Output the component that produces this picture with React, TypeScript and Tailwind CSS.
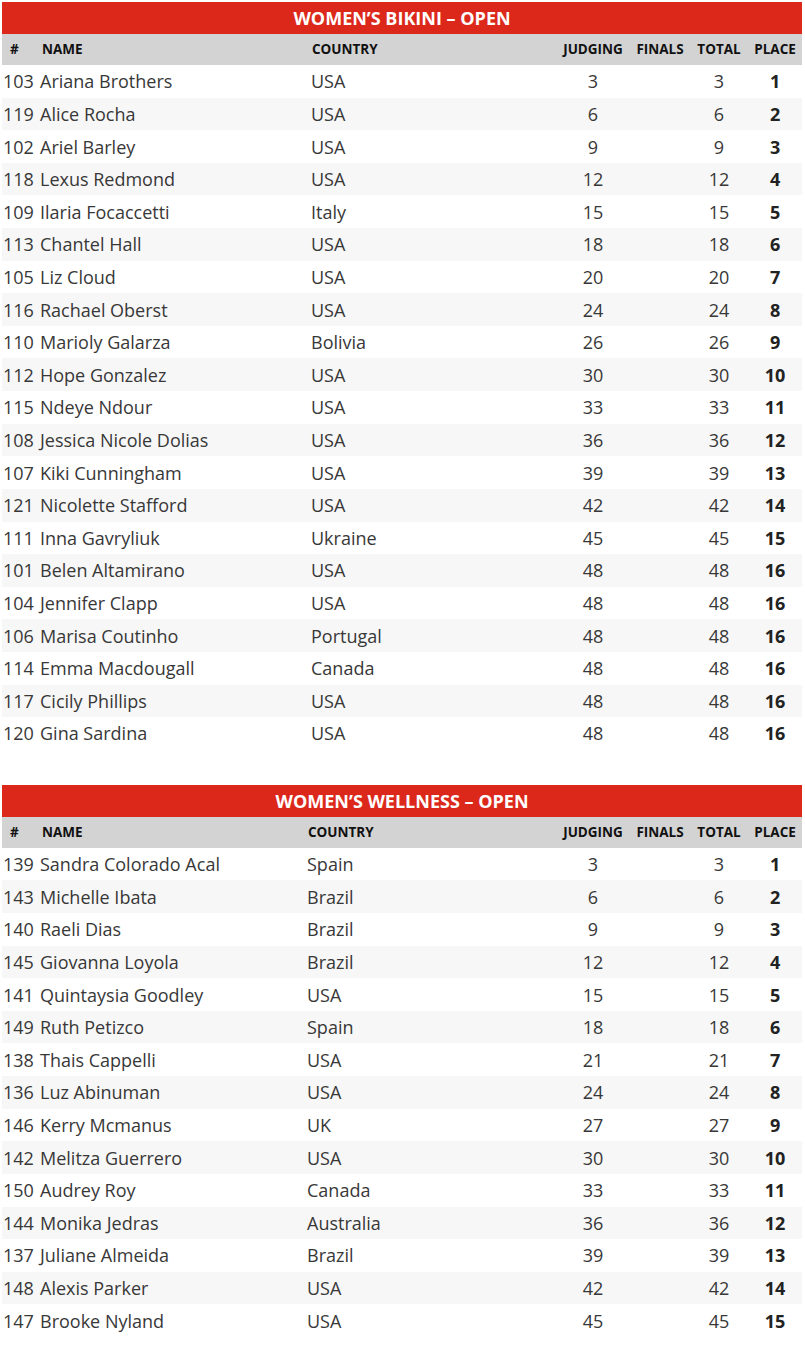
// Results tables — two divisions, zebra rows, red title bar.
type Row = [number, string, string, number, number, number];

const bikini: Row[] = [
  [103, "Ariana Brothers", "USA", 3, 3, 1],
  [119, "Alice Rocha", "USA", 6, 6, 2],
  [102, "Ariel Barley", "USA", 9, 9, 3],
  [118, "Lexus Redmond", "USA", 12, 12, 4],
  [109, "Ilaria Focaccetti", "Italy", 15, 15, 5],
  [113, "Chantel Hall", "USA", 18, 18, 6],
  [105, "Liz Cloud", "USA", 20, 20, 7],
  [116, "Rachael Oberst", "USA", 24, 24, 8],
  [110, "Marioly Galarza", "Bolivia", 26, 26, 9],
  [112, "Hope Gonzalez", "USA", 30, 30, 10],
  [115, "Ndeye Ndour", "USA", 33, 33, 11],
  [108, "Jessica Nicole Dolias", "USA", 36, 36, 12],
  [107, "Kiki Cunningham", "USA", 39, 39, 13],
  [121, "Nicolette Stafford", "USA", 42, 42, 14],
  [111, "Inna Gavryliuk", "Ukraine", 45, 45, 15],
  [101, "Belen Altamirano", "USA", 48, 48, 16],
  [104, "Jennifer Clapp", "USA", 48, 48, 16],
  [106, "Marisa Coutinho", "Portugal", 48, 48, 16],
  [114, "Emma Macdougall", "Canada", 48, 48, 16],
  [117, "Cicily Phillips", "USA", 48, 48, 16],
  [120, "Gina Sardina", "USA", 48, 48, 16],
];

const wellness: Row[] = [
  [139, "Sandra Colorado Acal", "Spain", 3, 3, 1],
  [143, "Michelle Ibata", "Brazil", 6, 6, 2],
  [140, "Raeli Dias", "Brazil", 9, 9, 3],
  [145, "Giovanna Loyola", "Brazil", 12, 12, 4],
  [141, "Quintaysia Goodley", "USA", 15, 15, 5],
  [149, "Ruth Petizco", "Spain", 18, 18, 6],
  [138, "Thais Cappelli", "USA", 21, 21, 7],
  [136, "Luz Abinuman", "USA", 24, 24, 8],
  [146, "Kerry Mcmanus", "UK", 27, 27, 9],
  [142, "Melitza Guerrero", "USA", 30, 30, 10],
  [150, "Audrey Roy", "Canada", 33, 33, 11],
  [144, "Monika Jedras", "Australia", 36, 36, 12],
  [137, "Juliane Almeida", "Brazil", 39, 39, 13],
  [148, "Alexis Parker", "USA", 42, 42, 14],
  [147, "Brooke Nyland", "USA", 45, 45, 15],
];

function ResultsTable({
  title,
  rows,
  nameW,
  countryW,
}: {
  title: string;
  rows: Row[];
  nameW: string;
  countryW: string;
}) {
  return (
    <table className="w-[800px] table-fixed border-collapse">
      <colgroup>
        <col className="w-[37px]" />
        <col className={nameW} />
        <col className={countryW} />
        <col className="w-[74px]" />
        <col className="w-[60px]" />
        <col className="w-[58px]" />
        <col className="w-[54px]" />
      </colgroup>
      <thead>
        <tr>
          <th
            colSpan={7}
            className="h-[32px] bg-[#dc281b] p-0 text-center text-[18px] font-bold uppercase text-white"
          >
            {title}
          </th>
        </tr>
        <tr className="bg-[#d3d3d3] text-[13.5px] font-extrabold text-[#111]">
          <th className="h-[31px] p-0 pl-2 text-left">#</th>
          <th className="p-0 pl-[3px] text-left">NAME</th>
          <th className="p-0 pl-[9px] text-left">COUNTRY</th>
          <th className="p-0 text-center">JUDGING</th>
          <th className="p-0 text-center">FINALS</th>
          <th className="p-0 text-center">TOTAL</th>
          <th className="p-0 text-center">PLACE</th>
        </tr>
      </thead>
      <tbody className="text-[18px] text-[#383838]">
        {rows.map((r, i) => (
          <tr key={r[0]} className={i % 2 === 1 ? "bg-[#f7f7f7]" : "bg-white"}>
            <td className="h-[32.62px] p-0 pl-px">{r[0]}</td>
            <td className="p-0 pl-px">{r[1]}</td>
            <td className="p-0 pl-2">{r[2]}</td>
            <td className="p-0 text-center">{r[3]}</td>
            <td className="p-0 text-center"></td>
            <td className="p-0 text-center">{r[4]}</td>
            <td className="p-0 text-center font-bold text-[#222]">{r[5]}</td>
          </tr>
        ))}
      </tbody>
    </table>
  );
}

export default function App() {
  return (
    <div className="flex flex-col gap-[35px] bg-white px-[2px] pt-[2px] pb-4 font-['Open_Sans',sans-serif] leading-none">
      <ResultsTable
        title="Women’s Bikini – Open"
        rows={bikini}
        nameW="w-[264px]"
        countryW="w-[253px]"
      />
      <ResultsTable
        title="Women’s Wellness – Open"
        rows={wellness}
        nameW="w-[260px]"
        countryW="w-[257px]"
      />
    </div>
  );
}
